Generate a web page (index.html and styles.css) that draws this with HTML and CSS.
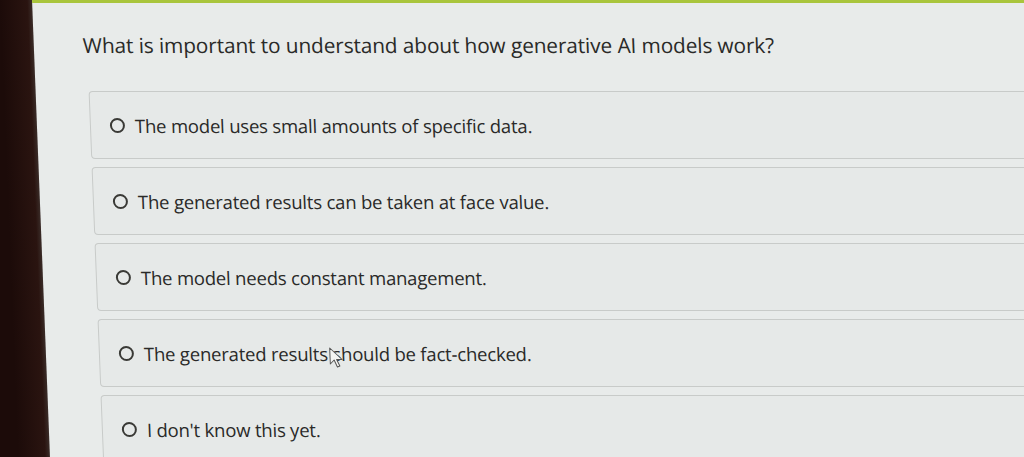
FILE: index.html
```html
<!DOCTYPE html>
<html lang="en">

<head>
    <meta charset="UTF-8">
    <meta name="viewport" content="width=device-width, initial-scale=1.0">
    <title>Quiz question</title>
    <link rel="stylesheet" href="styles.css">
</head>

<body>
    <div id="screen">
        <div class="bezel"></div>
        <div id="page">
            <h1 class="question">What is important to understand about how generative AI models work?</h1>
            <div class="options">
                <label class="option"><span class="radio"></span><span class="option-text">The model uses small amounts of specific data.</span></label>
                <label class="option"><span class="radio"></span><span class="option-text">The generated results can be taken at face value.</span></label>
                <label class="option"><span class="radio"></span><span class="option-text">The model needs constant management.</span></label>
                <label class="option"><span class="radio"></span><span class="option-text">The generated results should be fact-checked.</span>
                    <svg class="cursor" width="16" height="24" viewBox="0 0 16 24">
                        <path d="M1 1 L1 17 L5 13 L8 20 L10.5 19 L7.5 12.5 L13 12.5 Z" fill="#f4f4f2" stroke="#555" stroke-width="1" stroke-linejoin="round" />
                    </svg>
                </label>
                <label class="option"><span class="radio"></span><span class="option-text">I don't know this yet.</span></label>
            </div>
        </div>
    </div>
</body>

</html>
```

FILE: styles.css
```css
* {
    margin: 0;
    padding: 0;
    box-sizing: border-box;
}

body {
    width: 1024px;
    height: 457px;
    overflow: hidden;
    background-color: #1c0b09;
    font-family: "Open Sans", "Liberation Sans", sans-serif;
    color: #2a2a28;
}

/* the photo is taken at a slight angle */
#screen {
    display: flex;
    width: 1024px;
    height: 457px;
    transform: skewX(2.25deg);
    transform-origin: top left;
}

.bezel {
    width: 32px;
    flex-shrink: 0;
    background: linear-gradient(to right, #1c0b09, #2a1410 85%, #3a2c28);
}

#page {
    flex: 1;
    background-color: #e8ebea;
    border-top: 3px solid #a9c53c;
    padding: 28px 0 0 49px;
    overflow: hidden;
}

.question {
    font-size: 20.8px;
    font-weight: 400;
    line-height: 28px;
    color: #2a2a28;
    letter-spacing: -0.1px;
}

.options {
    display: flex;
    flex-direction: column;
    gap: 8px;
    margin: 32px -10px 0 4px;
}

.option {
    position: relative;
    display: flex;
    align-items: center;
    gap: 10px;
    height: 68px;
    padding-left: 19px;
    border: 1px solid #c8cbc9;
    border-radius: 4px;
    background-color: #e6e9e8;
}

.radio {
    width: 15px;
    height: 15px;
    border: 2px solid #3a3a36;
    border-radius: 50%;
    flex-shrink: 0;
}

.option-text {
    font-size: 18.5px;
    letter-spacing: -0.2px;
}

.cursor {
    position: absolute;
    left: 229px;
    top: 27px;
}
```
